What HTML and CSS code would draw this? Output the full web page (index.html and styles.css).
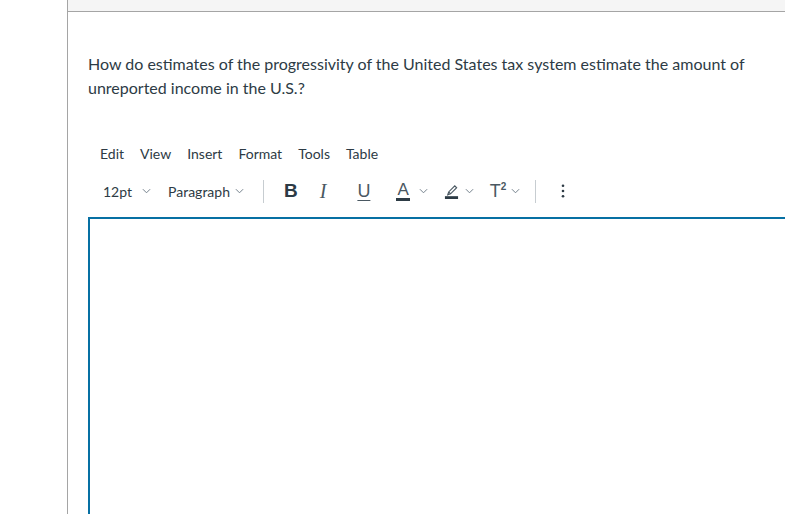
FILE: index.html
```html
<!DOCTYPE html>
<html>
<head>
<meta charset="utf-8">
<link rel="stylesheet" href="styles.css">
</head>
<body>
<div class="page">
  <div class="gutter"></div>
  <div class="main">
    <div class="topbar"></div>
    <div class="content">
      <p class="question">How do estimates of the progressivity of the United States tax system estimate the amount of unreported income in the U.S.?</p>
      <div class="menubar">
        <span class="menu">Edit</span>
        <span class="menu">View</span>
        <span class="menu">Insert</span>
        <span class="menu">Format</span>
        <span class="menu">Tools</span>
        <span class="menu">Table</span>
      </div>
      <div class="toolbar">
        <span class="drop size">12pt <svg class="chev" viewBox="0 0 10 6"><path d="M1 1l4 4 4-4" /></svg></span>
        <span class="drop para">Paragraph <svg class="chev" viewBox="0 0 10 6"><path d="M1 1l4 4 4-4" /></svg></span>
        <span class="sep"></span>
        <span class="btn bold">B</span>
        <span class="btn ital">I</span>
        <span class="btn under">U</span>
        <span class="btn color">
          <span class="aletter">A</span>
          <svg class="chev" viewBox="0 0 10 6"><path d="M1 1l4 4 4-4" /></svg>
        </span>
        <span class="btn hl">
          <svg class="pen" viewBox="0 0 16 16"><path d="M4 11.5l1-3 6.5-6.5 2 2L7 10.5z M5 8.5l2 2" /><rect class="bar" x="1" y="13" width="14" height="3"/></svg>
          <svg class="chev" viewBox="0 0 10 6"><path d="M1 1l4 4 4-4" /></svg>
        </span>
        <span class="btn sup">
          <span class="tletter">T<sup>2</sup></span>
          <svg class="chev" viewBox="0 0 10 6"><path d="M1 1l4 4 4-4" /></svg>
        </span>
        <span class="sep sep2"></span>
        <span class="btn more"><svg viewBox="0 0 4 16"><circle cx="2" cy="2" r="1.5"/><circle cx="2" cy="8" r="1.5"/><circle cx="2" cy="14" r="1.5"/></svg></span>
      </div>
      <div class="editor"></div>
    </div>
  </div>
</div>
</body>
</html>
```

FILE: styles.css
```css
html, body {
  margin: 0;
  padding: 0;
  background: #fff;
  overflow: hidden;
}
body {
  font-family: Lato, "Liberation Sans", sans-serif;
  color: #2d3b45;
}
.page {
  display: flex;
  height: 514px;
  width: 785px;
  overflow: hidden;
}
.gutter {
  width: 67px;
  flex: none;
}
.main {
  flex: 1;
  border-left: 1px solid #a5a5a5;
  display: flex;
  flex-direction: column;
  min-width: 0;
}
.topbar {
  height: 11px;
  background: #f5f5f5;
  border-bottom: 1px solid #a5a5a5;
  flex: none;
}
.content {
  padding-left: 20px;
  flex: 1;
  display: flex;
  flex-direction: column;
}
.question {
  margin: 40px 0 0 0;
  font-size: 16px;
  line-height: 24px;
  width: 680px;
}
.menubar {
  display: flex;
  margin-top: 41px;
  height: 24px;
  align-items: center;
  padding-left: 4px;
  font-size: 14px;
}
.menu {
  padding: 0 8px;
}
.toolbar {
  display: flex;
  align-items: center;
  height: 26px;
  margin-top: 13px;
  font-size: 14px;
}
.drop {
  display: flex;
  align-items: center;
}
.size {
  margin-left: 15px;
}
.size .chev {
  margin-left: 10px;
}
.para {
  margin-left: 17px;
}
.chev {
  width: 9px;
  height: 6px;
  margin-left: 5px;
  fill: none;
  stroke: #73818c;
  stroke-width: 1.1;
}
.sep {
  width: 1px;
  height: 23px;
  background: #c7cdd1;
  margin-left: 19px;
}
.btn {
  display: flex;
  align-items: center;
}
.bold {
  font-family: "Liberation Sans", sans-serif;
  font-weight: bold;
  font-size: 19px;
  margin-left: 20px;
  color: #2d3b45;
}
.ital {
  font-family: "Liberation Serif", serif;
  font-style: italic;
  font-size: 20px;
  margin-left: 22px;
  color: #4a5862;
}
.under {
  font-family: "Liberation Sans", sans-serif;
  font-size: 18px;
  text-decoration: underline;
  text-decoration-thickness: 1px;
  text-underline-offset: 3px;
  margin-left: 31px;
  color: #4a5862;
}
.color {
  margin-left: 26px;
}
.aletter {
  font-family: "Liberation Sans", sans-serif;
  font-size: 17px;
  line-height: 16px;
  color: #4a5862;
  border-bottom: 3px solid #2d3b45;
  padding: 0 1px;
}
.color .chev {
  margin-left: 9px;
}
.hl {
  margin-left: 16px;
}
.pen {
  width: 15px;
  height: 15px;
  fill: none;
  stroke: #4a5862;
  stroke-width: 1.2;
}
.pen .bar {
  fill: #2d3b45;
  stroke: none;
}
.hl .chev {
  margin-left: 6px;
}
.sup {
  margin-left: 16px;
}
.tletter {
  font-family: "Liberation Sans", sans-serif;
  font-size: 18px;
  color: #4a5862;
}
.tletter sup {
  font-size: 10px;
  font-weight: bold;
  vertical-align: 7px;
}
.sup .chev {
  margin-left: 5px;
}
.sep2 {
  margin-left: 15px;
}
.more {
  margin-left: 25px;
}
.more svg {
  width: 4px;
  height: 14px;
  fill: #2d3b45;
}
.editor {
  margin-top: 13px;
  border-top: 2px solid #0770a3;
  border-left: 2px solid #0770a3;
  flex: 1;
}
```
